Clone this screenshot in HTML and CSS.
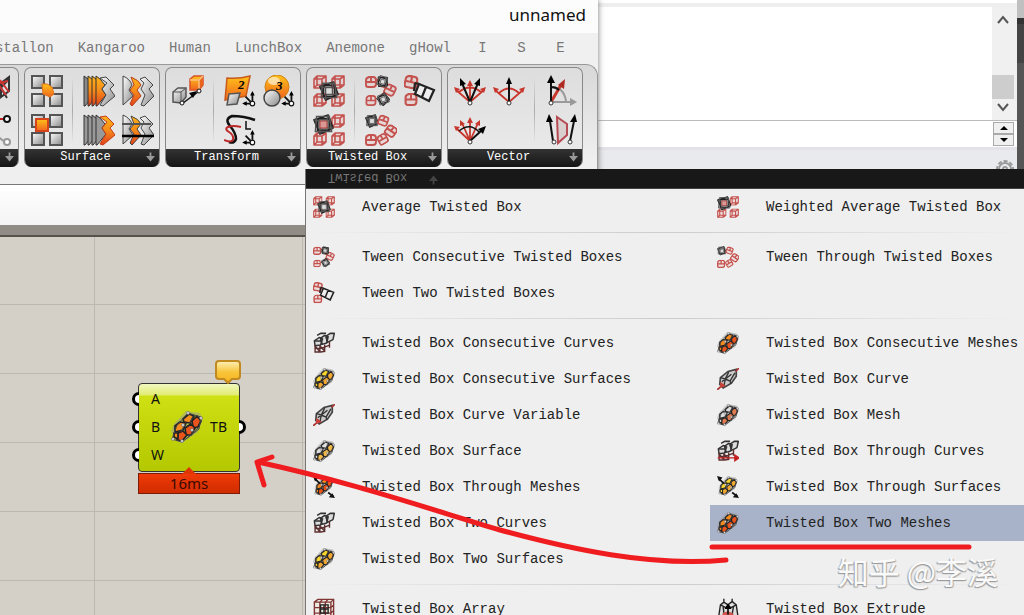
FILE: index.html
```
<!DOCTYPE html>
<html lang="en">
<head>
  <meta charset="UTF-8" />
  <meta name="viewport" content="width=device-width, initial-scale=1.0"/>
  <title>unnamed</title>
  <link rel="stylesheet" href="styles.css">
</head>
<body>
  <!-- Icon set -->
  <svg class="defs" aria-hidden="true">
    <linearGradient id="gGrey" x2="1" y2="1"><stop stop-color="#fff"/><stop offset="1" stop-color="#888"/></linearGradient>
    <linearGradient id="gOrange" x2="0" y2="1"><stop stop-color="#ffc21a"/><stop offset="1" stop-color="#f0641e"/></linearGradient>
    <linearGradient id="gFlame" x2="0" y2="1"><stop stop-color="#ffb41a"/><stop offset=".5" stop-color="#f58a1a"/><stop offset="1" stop-color="#e0401c"/></linearGradient>
    <linearGradient id="gGold" x2="0" y2="1"><stop stop-color="#fff0b8"/><stop offset=".5" stop-color="#f8c53c"/><stop offset="1" stop-color="#f6b21d"/></linearGradient>

    <symbol id="cube" viewBox="0 0 14 14">
      <path d="M1 4h8v9H1zM4 1h9v9H4zM1 4l3-3M9 4l4-3M9 13l4-3M1 13l3-3" fill="#e9b5b2" fill-opacity=".3" stroke="currentColor" stroke-width="1.600" stroke-linejoin="round"/>
    </symbol>
    <symbol id="core" viewBox="0 0 18 18">
      <path d="M1 5l12-4 4 11-11 5zM4 4h10v10H4z" fill="none" stroke="#222" stroke-width="1.700" stroke-linejoin="round"/>
      <path d="M3 2h11l2 13H2zM1 5l5 1M13 1l-1 5M17 12l-5 0M6 17v-5" fill="none" stroke="#555" stroke-width="1.200"/>
      <rect x="6" y="6" width="6" height="6" fill="#ddd" stroke="#444"/>
    </symbol>
    <symbol id="brick" viewBox="0 0 12 12">
      <path d="M1 4q0-2 3-3h4q3 0 3 3v4q0 3-3 3H3q-2 0-2-2zM1 6h10M6 1v5" fill="#e9b5b2" fill-opacity=".3" stroke="currentColor" stroke-width="1.900"/>
    </symbol>

    <symbol id="average" viewBox="0 0 32 32">
      <g class="red"><use href="#cube" x="0" y="0" width="14" height="14"/><use href="#cube" x="18" y="0" width="14" height="14"/><use href="#cube" x="0" y="18" width="14" height="14"/><use href="#cube" x="18" y="18" width="14" height="14"/></g>
      <use href="#core" x="6" y="6" width="20" height="20"/>
    </symbol>
    <symbol id="weighted" viewBox="0 0 32 32">
      <g class="red"><use href="#cube" x="18" y="0" width="14" height="14"/><use href="#cube" x="0" y="18" width="14" height="14"/><use href="#cube" x="18" y="18" width="14" height="14"/></g>
      <use href="#core" x="0" y="0" width="21" height="21"/>
      <path d="M7 7h7v7H7z" fill="#d99894" stroke="#b0403c"/>
    </symbol>
    <symbol id="tween-consecutive" viewBox="0 0 32 32">
      <g class="red"><use href="#brick" x="0" y="1" width="12" height="12"/><use href="#brick" x="0" y="20" width="12" height="11"/><use href="#brick" x="19" y="9" width="12" height="12" transform="rotate(25 25 15)"/><path d="M10 5l5 0M16 11l6 2M16 20l5-2" stroke="currentColor" stroke-width="2"/></g>
      <use href="#core" x="11" y="0" width="13" height="13" transform="rotate(20 17 7)"/><use href="#core" x="12" y="18" width="13" height="13" transform="rotate(-20 18 25)"/>
    </symbol>
    <symbol id="tween-through" viewBox="0 0 32 32">
      <use href="#core" x="0" y="0" width="14" height="14"/>
      <g class="red"><use href="#brick" x="13" y="1" width="11" height="11" transform="rotate(20 18 6)"/><use href="#brick" x="20" y="11" width="12" height="12" transform="rotate(35 26 17)"/><use href="#brick" x="12" y="20" width="11" height="11" transform="rotate(-30 17 25)"/><use href="#brick" x="0" y="20" width="12" height="12"/></g>
    </symbol>
    <symbol id="tween-two" viewBox="0 0 32 32">
      <g class="red"><use href="#brick" x="0" y="0" width="14" height="14" transform="rotate(12 7 7)"/><use href="#brick" x="0" y="18" width="14" height="13"/></g>
      <path d="M15 9l15 6-5 11-14-7zM22 12l-4 10M11 8l4 1M11 8l-1 8" fill="#eee" stroke="#222" stroke-width="2.200"/>
    </symbol>

    <!-- twisted box bodies, the cell colour comes from the svg's class -->
    <symbol id="cells" viewBox="0 0 32 32">
      <path d="M0 20l5 10 6 2 16-11 5-13-3-6-14-2L3 13z" fill="#999" opacity=".5"/>
      <g stroke="#222" stroke-width="1.700" stroke-linejoin="round">
        <path class="cell-a" d="M4 15l5-4 6 1-3 7-8 2z"/>
        <path class="cell-a" d="M12 8l6-5 5 2-4 7-6-1z"/>
        <path class="cell-b" d="M21 10l5-5 4 5-3 6-5 1z"/>
        <path class="cell-b" d="M14 17l6-4 4 4-4 7-5 0z"/>
        <path class="cell-b" d="M7 22l5-2 4 4-5 6-5-1z"/>
        <path class="cell-a" d="M3 22l4 0 0 6-4-2z"/>
      </g>
      <path d="M1 28l5-14 11-12 13 4-2 12-17 13zM10 21l4-8M19 12l3-7M15 28l12-11" fill="none" stroke="#444"/>
      <g fill="#ddd" stroke="#555" stroke-width=".5"><circle cx="2" cy="28" r="1.500"/><circle cx="17" cy="2" r="1.500"/><circle cx="30" cy="7" r="1.500"/><circle cx="12" cy="14" r="1.500"/><circle cx="21" cy="19" r="1.500"/><circle cx="11" cy="30" r="1.500"/></g>
    </symbol>
    <symbol id="cells-through" viewBox="0 0 32 32">
      <use href="#cells" x="2" y="0" width="28" height="29"/>
      <path d="M2 3l8 8M22 24l8 6" stroke="#111" stroke-width="2.500"/>
      <path d="M0 0l8 2-5 6zM32 32l-9-1 5-6z" fill="#111"/>
    </symbol>
    <symbol id="frames" viewBox="0 0 32 32">
      <g fill="#ddd" stroke="#333" stroke-width="2.200" stroke-linejoin="round">
        <path d="M2 13l7-5 5 2-3 9-8 1zM11 9l6-4 5 2-2 9-7 2zM19 6l6-4h6l-2 9-8 4z"/>
        <path d="M3 13h8M11 9l2 9M19 7l2 8M6 5l5-3h8" fill="none"/>
      </g>
      <path d="M3 19v10M10 19v11M17 18v11M24 13v10M3 24h7l7-2 7-3M2 29h9l7-1M3 20l7 9M10 20l7 8" fill="none" stroke="#5d3030" stroke-width="2"/>
    </symbol>
    <symbol id="frames-through" viewBox="0 0 32 32">
      <use href="#frames"/>
      <path d="M1 26h24M26 22l6 4-6 4z" fill="#c32020" stroke="#c32020" stroke-width="2"/>
    </symbol>
    <symbol id="capsule" viewBox="0 0 32 32">
      <path d="M4 24l1-10 11-9 12-3 0 10-7 10-12 7z" fill="#ccc" stroke="#444" stroke-width="2.500"/>
      <path d="M5 14l7 2 5-10M12 16l-2 11M12 16l7 3 7-12M19 19l1 4M7 20l14-11" fill="none" stroke="#333" stroke-width="2"/>
      <path d="M0 32l7-6M27 5l5-5" stroke="#a33" stroke-width="2.500"/>
      <path d="M4 29l1-9 8 6z" fill="#c94138"/>
    </symbol>
    <symbol id="array" viewBox="0 0 32 32">
      <path d="M2 6h24v24H2zM2 14h24M2 22h24M10 6v24M18 6v24M2 6l5-4h23v23l-4 5M26 6l4-4M26 14l4-4M26 22l4-4M10 6l4-4M18 6l4-4" fill="#dda" fill-opacity=".2" stroke="#813434" stroke-width="2"/>
      <path d="M11 10h11v12H11zM11 16h11M16 10v12" fill="none" stroke="#222" stroke-width="2"/>
    </symbol>
    <symbol id="extrude" viewBox="0 0 32 32">
      <path d="M2 30l3-20 5-4 6 4 6-5 6 5 3 20M5 10l8 4 3-4 4 4 8-4M10 6V1M22 5V1M9 13l2 17M24 12l-3 18" fill="#ddd" stroke="#222" stroke-width="2"/>
      <path d="M8 22l8-3 8 4v9H8z" fill="#d0524c"/>
      <path d="M16 24V13" stroke="#111" stroke-width="2.500"/><path d="M16 8l5 8H11z"/>
    </symbol>

    <symbol id="axes" viewBox="0 0 12 14">
      <path d="M9 2v9H2M9 11l-6-6" fill="none" stroke="#111" stroke-width="1.600"/>
      <path d="M9 0l2 4H7zM0 11l4-2v4z"/>
      <circle cx="9" cy="11" r="2" fill="#fff" stroke="#111"/>
    </symbol>
    <symbol id="vein" viewBox="0 0 12 32">
      <path d="M1 1q4 2 9 9l-3 4 4 6-9 11H1z" stroke="#333"/>
    </symbol>
    <symbol id="drop" viewBox="0 0 10 10">
      <path d="M4 0h2v4h4L5 10 0 4h4z"/>
    </symbol>
  </svg>

  <!-- Command history window -->
  <section class="rhino">
    <div class="rhino-main">
      <div class="history">
        <textarea aria-label="Command history" readonly></textarea>
        <div class="scroll">
          <button aria-label="Scroll up"><svg width="12" height="10" viewBox="0 0 12 10"><path d="M1 8l5-6 5 6" fill="none" stroke="#555" stroke-width="2"/></svg></button>
          <span class="thumb"></span>
          <button aria-label="Scroll down"><svg width="12" height="10" viewBox="0 0 12 10"><path d="M1 2l5 6 5-6" fill="none" stroke="#555" stroke-width="2"/></svg></button>
        </div>
      </div>
      <div class="command">
        <input type="text" aria-label="Command">
        <div class="spinner">
          <button aria-label="Previous"><svg width="8" height="4" viewBox="0 0 8 4"><path d="M0 4l4-4 4 4z"/></svg></button>
          <button aria-label="Next"><svg width="8" height="4" viewBox="0 0 8 4"><path d="M0 0l4 4 4-4z"/></svg></button>
        </div>
      </div>
      <div class="rhino-tabs">
        <svg width="20" height="20" viewBox="0 0 20 20" fill="none" stroke="#999" stroke-width="2"><circle cx="10" cy="10" r="8" stroke-dasharray="4 2"/><circle cx="10" cy="10" r="6"/><circle cx="10" cy="10" r="2"/></svg>
      </div>
    </div>
    <div class="rhino-side"></div>
  </section>

  <!-- Grasshopper window -->
  <main class="gh">
    <h1 class="title">unnamed</h1>
    <nav class="tabs">
      <a href="#">Crystallon</a>
      <a href="#">Kangaroo</a>
      <a href="#">Human</a>
      <a href="#">LunchBox</a>
      <a href="#">Anemone</a>
      <a href="#">gHowl</a>
      <a href="#" class="short">I</a>
      <a href="#" class="short">S</a>
      <a href="#" class="short">E</a>
    </nav>

    <div class="ribbon">
      <div class="panel">
        <div class="tools end">
          <div class="set">
            <svg viewBox="0 0 32 32" fill="none" stroke="#333" stroke-width="2"><path d="M3 4l12 14L28 4M8 24l9-16 9 15M20 8l8-6v14l-8 6z"/><path d="M4 12l23-6M12 2l13 18M19 5l9 12" stroke="#c33"/></svg>
            <svg viewBox="0 0 32 32" fill="none" stroke="#999" stroke-width="2"><path d="M2 20l14 2 8 6"/><path d="M8 5h16" stroke="#b22"/><circle cx="26" cy="5" r="3" fill="#fff" stroke="#111"/><circle cx="26" cy="28" r="3" fill="#fff"/></svg>
          </div>
        </div>
        <button class="panel-name" aria-label="More"><span></span><svg><use href="#drop"/></svg></button>
      </div>

      <div class="panel">
        <div class="tools">
          <div class="set">
            <svg viewBox="0 0 32 32" fill="url(#gGrey)" stroke="#555" stroke-width="2"><path d="M1 1h12v12H1z"/><path d="M19 1h12v12H19z"/><path d="M1 19h12v12H1z"/><path d="M19 19h12v12H19z"/><path d="M11 9l5 0 5 3 2 7-4 3-7-3z" fill="url(#gOrange)" stroke="#e0741a" stroke-width="1"/></svg>
            <svg viewBox="0 0 32 32" fill="url(#gGrey)" stroke="#555" stroke-width="2"><path d="M1 1h12v12H1z"/><path d="M19 1h12v12H19z"/><path d="M1 19h12v12H1z"/><path d="M19 19h12v12H19z"/><path d="M5 5h12v12H5z" fill="url(#gOrange)" stroke="#d8441a"/></svg>
          </div>
          <hr>
          <div class="set two">
            <svg viewBox="0 0 32 32"><use href="#vein" x="0" width="12" height="32" fill="#888"/><g fill="url(#gFlame)"><use href="#vein" x="4" width="12" height="32"/><use href="#vein" x="8" width="12" height="32"/><use href="#vein" x="12" width="12" height="32"/></g><path d="M17 3l6-1 8 8-4 4 5 7-12 10-3-1 6-10-4-6 5-6z" fill="url(#gGrey)" stroke="#444"/></svg>
            <svg viewBox="0 0 32 32"><g fill="url(#gGrey)" stroke="#444"><path d="M1 1q7 3 9 9l-3 5 4 6L1 30z"/><path d="M18 4l5-2 8 8-4 4 5 7-10 10-3-1 4-10-4-6 3-6z"/><path d="M9 2q8 3 10 8l-4 5 4 6-9 10-2-2 4-9-4-5 4-5z" fill="url(#gFlame)" stroke="#b5401c"/></g></svg>
            <svg viewBox="0 0 32 32"><g fill="#999"><use href="#vein" x="0" width="12" height="32"/><use href="#vein" x="4" width="12" height="32"/><use href="#vein" x="8" width="12" height="32"/><use href="#vein" x="12" width="12" height="32"/></g><path d="M17 3l6-1 8 8-4 4 5 7-12 10-3-1 6-10-4-6 5-6z" fill="url(#gFlame)" stroke="#c43c18"/></svg>
            <svg viewBox="0 0 32 32"><g fill="url(#gGrey)" stroke="#444"><path d="M1 1q7 3 9 9l-3 5 4 6L1 30z"/><path d="M18 4l5-2 8 8-4 4 5 7-10 10-3-1 4-10-4-6 3-6z"/><path d="M9 2q8 3 10 8l-4 5 4 6-9 10-2-2 4-9-4-5 4-5z" fill="url(#gFlame)"/></g><path d="M0 10h29" stroke="#555" stroke-width="2"/><path d="M0 22h32" stroke="#000" stroke-width="2.500"/></svg>
          </div>
        </div>
        <button class="panel-name"><span>Surface</span><svg><use href="#drop"/></svg></button>
      </div>

      <div class="panel">
        <div class="tools">
          <div class="set">
            <svg viewBox="0 0 32 32"><path d="M18 4l4-3h9v9l-4 5h-9z" fill="url(#gOrange)" stroke="#d8502a" stroke-width="1.500"/><path d="M27 5l4-4v9l-4 5z" fill="#e8641e"/><path d="M18 5h9v9M27 5l4-4" fill="none" stroke="#ffc080" stroke-width="1.500"/><path d="M1 17l5-4h8v9l-5 6-8-1z" fill="url(#gGrey)" stroke="#555" stroke-width="1.500"/><path d="M1 17h8v10M9 17l5-4" fill="none" stroke="#555"/><path d="M11 28l15-11" stroke="#111" stroke-width="1.500"/><path d="M25 16l-8 2 4 5z"/><circle cx="10" cy="28" r="2" fill="#fff" stroke="#111"/><circle cx="27" cy="16" r="2" fill="#fff" stroke="#111"/></svg>
          </div>
          <hr>
          <div class="set two">
            <svg viewBox="0 0 32 32"><path d="M3 3q12 1 23-2l-4 20-21 4z" fill="url(#gOrange)" stroke="#c65a1a" stroke-width="1.500"/><path d="M5 19l11-1-3 11-10 1z" fill="url(#gGrey)" stroke="#555" stroke-width="1.500"/><text x="14" y="14" class="digit">2</text><use href="#axes" x="18" y="16" width="14" height="16"/></svg>
            <svg viewBox="0 0 32 32"><circle cx="14" cy="12" r="12" fill="url(#gOrange)" stroke="#d08318"/><ellipse cx="11" cy="6" rx="6" ry="4" fill="#fff" opacity=".6"/><circle cx="9" cy="23" r="8" fill="url(#gGrey)" stroke="#444" stroke-width="1.500"/><text x="13" y="15" class="digit">3</text><use href="#axes" x="18" y="16" width="14" height="16"/></svg>
            <svg viewBox="0 0 32 32"><path d="M31 6Q20 2 8 2 0 5 6 12t6 13q-2 5-7 3" fill="none" stroke="#111" stroke-width="2.500"/><path d="M17 13q-8-2-13 0-4 2 1 5t4 8q-3 3-9 0" fill="none" stroke="#bd2929" stroke-width="2"/><path d="M22 7v8h5" fill="none" stroke="#111" stroke-width="1.500"/><use href="#axes" x="18" y="16" width="14" height="16"/></svg>
          </div>
        </div>
        <button class="panel-name"><span>Transform</span><svg><use href="#drop"/></svg></button>
      </div>

      <div class="panel">
        <div class="tools">
          <div class="set">
            <svg><use href="#average"/></svg>
            <svg><use href="#weighted"/></svg>
          </div>
          <hr>
          <div class="set two">
            <svg><use href="#tween-consecutive"/></svg>
            <svg><use href="#tween-two"/></svg>
            <svg><use href="#tween-through"/></svg>
          </div>
        </div>
        <button class="panel-name"><span>Twisted Box</span><svg><use href="#drop"/></svg></button>
      </div>

      <div class="panel">
        <div class="tools">
          <div class="set two">
            <svg viewBox="0 0 32 32"><g stroke="#c8372d" stroke-width="1.800" fill="none"><path d="M16 27L2 15M16 27l14-12M16 27V8M5 17q11-9 22 0"/></g><path d="M0 12l6 2-4 4zM32 12l-6 2 4 4zM16 5l3 6h-6z" fill="#c8372d"/><path d="M16 27L8 8M16 27l8-19" stroke="#111" stroke-width="2"/><path d="M6 3l6 6-6 2zM26 3l-6 6 6 2z"/><circle cx="16" cy="28" r="2" fill="#fff" stroke="#333"/></svg>
            <svg viewBox="0 0 32 32"><g stroke="#c8372d" stroke-width="1.800" fill="none"><path d="M16 27L2 15M16 27l14-12M6 18q10-9 20 0"/></g><path d="M0 12l6 2-4 4zM32 12l-6 2 4 4z" fill="#c8372d"/><path d="M16 27V7" stroke="#111" stroke-width="2"/><path d="M16 2l3 7h-6z"/><circle cx="16" cy="28" r="2" fill="#fff" stroke="#333"/></svg>
            <svg viewBox="0 0 32 32"><g stroke="#c8372d" stroke-width="1.800" fill="none"><path d="M16 27L2 14M16 27L8 9M16 27V7M16 27l8-18"/></g><path d="M0 12l6 1-4 4zM6 6l5 4-5 2zM16 3l3 6h-6zM26 6l-5 4 5 2z" fill="#c8372d"/><path d="M5 17q11-9 20 1" fill="none" stroke="#111" stroke-width="1.500"/><path d="M16 27l11-10" stroke="#111" stroke-width="2"/><path d="M32 12l-3 8-5-5z"/><circle cx="16" cy="28" r="2" fill="#fff" stroke="#333"/></svg>
          </div>
          <hr>
          <div class="set">
            <svg viewBox="0 0 32 32"><path d="M6 27h20M6 12q13 0 15 14" fill="none" stroke="#999" stroke-width="2"/><path d="M32 27l-7-4v8z" fill="#999"/><path d="M6 27l10-17" stroke="#c8372d" stroke-width="3"/><path d="M20 4l-1 10-6-4z" fill="#b02a24"/><path d="M6 27V6M6 12q5 0 8 3" fill="none" stroke="#111" stroke-width="2"/><path d="M6 0l4 8H2z"/><circle cx="6" cy="28" r="2" fill="#fff" stroke="#333"/></svg>
            <svg viewBox="0 0 32 32"><path d="M12 3l10 7v11l-9 8z" fill="#d9cfcf" stroke="#b64a52" stroke-width="2"/><path d="M8 27L5 7M25 27l4-20" stroke="#111" stroke-width="2"/><path d="M4 0l4 8H1zM30 0l2 8h-7z"/><circle cx="9" cy="28" r="2" fill="#fff" stroke="#333"/><circle cx="25" cy="28" r="2" fill="#fff" stroke="#333"/></svg>
          </div>
        </div>
        <button class="panel-name"><span>Vector</span><svg><use href="#drop"/></svg></button>
      </div>
    </div>

    <div class="canvas-bar"></div>

    <div class="canvas">
      <div class="component">
        <div class="body">
          <ul class="ports in"><li>A</li><li>B</li><li>W</li></ul>
          <svg class="mesh"><use href="#cells"/></svg>
          <ul class="ports out"><li>TB</li></ul>
        </div>
        <div class="profiler">16ms</div>
        <svg class="bubble" viewBox="0 0 26 24"><path d="M4 1h18q3 0 3 3v12q0 3-3 3h-5l-4 4-4-4H4q-3 0-3-3V4q0-3 3-3z" fill="url(#gGold)" stroke="#c08a20" stroke-width="2"/></svg>
      </div>
    </div>
  </main>

  <!-- Drop-down of the Twisted Box panel -->
  <div class="menu">
    <div class="menu-head"><span>Twisted Box</span><svg><use href="#drop"/></svg></div>
    <div class="items">
      <button><svg><use href="#average"/></svg>Average Twisted Box</button>
      <button><svg><use href="#weighted"/></svg>Weighted Average Twisted Box</button>
    </div>
    <hr>
    <div class="items">
      <button><svg><use href="#tween-consecutive"/></svg>Tween Consecutive Twisted Boxes</button>
      <button><svg><use href="#tween-through"/></svg>Tween Through Twisted Boxes</button>
      <button><svg><use href="#tween-two"/></svg>Tween Two Twisted Boxes</button>
    </div>
    <hr>
    <div class="items">
      <button><svg><use href="#frames"/></svg>Twisted Box Consecutive Curves</button>
      <button><svg class="mesh"><use href="#cells"/></svg>Twisted Box Consecutive Meshes</button>
      <button><svg class="surf"><use href="#cells"/></svg>Twisted Box Consecutive Surfaces</button>
      <button><svg><use href="#capsule"/></svg>Twisted Box Curve</button>
      <button><svg><use href="#capsule"/></svg>Twisted Box Curve Variable</button>
      <button><svg class="half-mesh"><use href="#cells"/></svg>Twisted Box Mesh</button>
      <button><svg class="half-surf"><use href="#cells"/></svg>Twisted Box Surface</button>
      <button><svg><use href="#frames-through"/></svg>Twisted Box Through Curves</button>
      <button><svg class="mesh"><use href="#cells-through"/></svg>Twisted Box Through Meshes</button>
      <button><svg class="surf"><use href="#cells-through"/></svg>Twisted Box Through Surfaces</button>
      <button><svg><use href="#frames"/></svg>Twisted Box Two Curves</button>
      <button class="selected"><svg class="mesh"><use href="#cells"/></svg>Twisted Box Two Meshes</button>
      <button><svg class="surf"><use href="#cells"/></svg>Twisted Box Two Surfaces</button>
    </div>
    <hr>
    <div class="items">
      <button><svg><use href="#array"/></svg>Twisted Box Array</button>
      <button><svg><use href="#extrude"/></svg>Twisted Box Extrude</button>
    </div>
  </div>

  <!-- Red pen marks -->
  <svg class="marks" width="1024" height="615" viewBox="0 0 1024 615" aria-hidden="true">
    <path d="M726 560C650 567 570 549 500 530 420 506 350 482 258 462M272 457l-15 5 7 23M712 547H969"/>
  </svg>
  <div class="watermark" lang="zh">知乎 @李溪</div>
</body>
</html>
```
FILE: styles.css
```
*,
*::before,
*::after {
  box-sizing: border-box;
}

body {
  margin: 0;
  height: 100vh;
  position: relative;
  overflow: hidden;
  background: #efefef;
  font-family: "Liberation Mono", monospace;
  font-size: 14px;
  color: #222;
}

button {
  padding: 0;
  border: none;
  background: none;
  font: inherit;
  color: inherit;
}

hr {
  border: none;
  margin: 0;
}

.defs {
  position: absolute;
  width: 0;
  height: 0;
}

.red {
  color: #c4524e;
}

.digit {
  font: italic bold 13px "Liberation Serif", serif;
}

/* command history window */
.rhino {
  position: absolute;
  left: 598px;
  right: 0;
  top: 0;
  height: 170px;
  display: flex;
  background: #eee;
}

.rhino-main {
  flex: 1;
  display: flex;
  flex-direction: column;
  border-top: 3px solid #fff;
  padding-top: 4px;
}

.history {
  flex: 1;
  display: flex;
  border-bottom: 1px solid #bbb;
}

.history textarea,
.command input {
  flex: 1;
  min-width: 0;
  border: none;
  resize: none;
  background: #fff;
}

.scroll {
  width: 25px;
  padding: 5px 3px 3px 0;
  display: flex;
  flex-direction: column;
  background: #f0f0f0;
}

.scroll .thumb {
  height: 24px;
  margin-top: auto;
  background: #cdcdcd;
}

.scroll button {
  height: 18px;
}

.command {
  height: 26px;
  display: flex;
  background: #fff;
}

.spinner {
  width: 21px;
  margin: 1px 3px 1px 0;
  display: flex;
  flex-direction: column;
}

.spinner button {
  flex: 1;
  display: grid;
  place-items: center;
  border: 1px solid #aaa;
  background: #f0f0f0;
}

.rhino-tabs {
  height: 23px;
  padding: 9px 2px 0 0;
  border-top: 3px solid #e2e2e8;
  text-align: right;
  overflow: hidden;
  background: #e9eaee;
}

.rhino-side {
  width: 7px;
  background: linear-gradient(#c0c0c0 18px, #333 18px, #333 24px, #444 24px, #444 63px, #555 63px);
}

/* grasshopper window */
.gh {
  position: absolute;
  left: 0;
  top: 0;
  bottom: 0;
  width: 598px;
  display: flex;
  flex-direction: column;
  background: #f0f0f0;
  box-shadow: 0 0 6px #777;
}

.title {
  margin: 0;
  height: 33px;
  padding-right: 12px;
  background: #fcfcfc;
  font: 17px/30px "Noto Sans", sans-serif;
  color: #111;
  text-align: right;
}

.tabs {
  height: 31px;
  padding-right: 18px;
  display: flex;
  justify-content: flex-end;
  overflow: hidden;
  line-height: 31px;
}

.tabs a {
  flex: none;
  padding: 0 12px;
  color: #777;
  text-decoration: none;
}

.tabs .short {
  width: 39px;
  padding: 0;
  text-align: center;
}

.ribbon {
  height: 121px;
  padding: 2px 14px 0 0;
  display: flex;
  justify-content: flex-end;
  align-items: flex-start;
  gap: 5px;
  overflow: hidden;
  border: 1px solid #999;
  border-width: 1px 1px 1px 0;
  border-bottom-color: #777;
  border-radius: 0 12px 0 0;
  background: linear-gradient(#d8d8d8, #efefef 80%);
}

.panel {
  flex: none;
  width: 136px;
  border: 1px solid #888;
  border-bottom: none;
  border-radius: 7px;
  overflow: hidden;
  background: linear-gradient(#ddd, #ececec);
}

.tools {
  height: 81px;
  padding: 3px 2px 0;
  display: flex;
}

.tools.end {
  justify-content: flex-end;
}

.set {
  display: grid;
  grid-template-columns: 39px;
  grid-auto-rows: 39px;
  place-items: center;
}

.set.two {
  grid-template-columns: 39px 39px;
}

.set svg {
  width: 32px;
  height: 32px;
}

.tools hr {
  width: 1px;
  height: 66px;
  margin: 6px;
  background: linear-gradient(transparent, #aaa, transparent);
}

.panel-name {
  width: 100%;
  height: 18px;
  padding: 0 4px 2px 0;
  display: flex;
  align-items: center;
  background: linear-gradient(#333, #151515);
  color: #fff;
  font-size: 12px;
}

.panel-name span {
  flex: 1;
}

.panel-name svg,
.menu-head svg {
  width: 9px;
  height: 10px;
  fill: #999;
}

.canvas-bar {
  height: 50px;
  border-bottom: 10px solid #918d86;
  background: linear-gradient(#fff, #f4f4f4);
}

.canvas {
  flex: 1;
  position: relative;
  border-top: 2px solid #55524c;
  background-color: #d4d0c8;
  background-image: linear-gradient(#bcb9b2 1px, transparent 1px), linear-gradient(90deg, #bcb9b2 1px, transparent 1px);
  background-size: 208px 69px;
  background-position: 94px 67px;
}

.component {
  position: absolute;
  left: 138px;
  top: 146px;
  width: 102px;
}

.bubble {
  position: absolute;
  right: -1px;
  top: -23px;
  width: 26px;
  height: 24px;
}

.body {
  height: 89px;
  padding-bottom: 2px;
  display: flex;
  align-items: center;
  justify-content: space-between;
  border: 1px solid #333;
  border-radius: 4px;
  background: linear-gradient(#f2f8c0, #e0ec72 11px, #cfe013 12px, #b4c800);
  font: 14px/28px "Noto Sans", sans-serif;
  color: #111;
}

.body .mesh {
  width: 32px;
  height: 32px;
}

.ports {
  margin: 0;
  padding: 0;
  list-style: none;
}

.ports li {
  display: flex;
  align-items: center;
  gap: 12px;
}

/* half ring that sticks out of the body */
.in li::before,
.out li::after {
  content: "";
  width: 7px;
  height: 14px;
  border: 3px solid #000;
  background: #fff;
}

.in li::before {
  margin-left: -7px;
  border-right: none;
  border-radius: 7px 0 0 7px;
}

.out li::after {
  margin-right: -7px;
  border-left: none;
  border-radius: 0 7px 7px 0;
}

.profiler {
  position: relative;
  height: 21px;
  margin-top: 1px;
  border: 1px solid #7a1c08;
  background: linear-gradient(#f03a08, #cf2c00);
  font: 15px/18px "Noto Sans", sans-serif;
  color: #3a0a00;
  text-align: center;
}

.profiler::before {
  content: "";
  position: absolute;
  left: 43px;
  bottom: 100%;
  border: 7px solid transparent;
  border-top: none;
  border-bottom-color: #e03505;
}

/* drop-down menu */
.menu {
  position: absolute;
  left: 305px;
  right: 0;
  top: 169px;
  bottom: 0;
  overflow: hidden;
  border-left: 1px solid #777;
  background: #efefef;
}

.menu-head {
  height: 20px;
  padding: 0 0 0 22px;
  display: flex;
  align-items: flex-start;
  gap: 22px;
  border-bottom: 1px solid #444;
  background: #181818;
  color: #777;
  font-size: 12px;
  line-height: 16px;
}

.menu-head span {
  transform: scaleY(-1);
}

.menu-head svg {
  margin-top: 6px;
  transform: scaleY(-1);
  fill: #444;
}

.items {
  display: grid;
  grid-template-columns: 404px 1fr;
}

.items button {
  height: 36px;
  padding: 0 0 1px 7px;
  display: flex;
  align-items: center;
  gap: 27px;
  white-space: nowrap;
  text-align: left;
}

.items .selected {
  background: #a8b3c9;
}

.items svg {
  flex: none;
  width: 22px;
  height: 22px;
}

.menu > hr {
  height: 1px;
  margin: 7px 0 6px;
  background: linear-gradient(90deg, transparent, #ccc 50%, transparent);
}

/* cell colours of the twisted boxes */
.mesh {
  --cell-a: #f58a1f;
  --cell-b: #e8541c;
}

.surf {
  --cell-a: #fad52c;
  --cell-b: #f2a830;
}

.half-mesh {
  --cell-a: #ddd;
  --cell-b: #dd7a50;
}

.half-surf {
  --cell-a: #ddd;
  --cell-b: #f0b848;
}

.cell-a {
  fill: var(--cell-a);
}

.cell-b {
  fill: var(--cell-b);
}

.marks {
  position: absolute;
  left: 0;
  top: 0;
  pointer-events: none;
  fill: none;
  stroke: #f01d20;
  stroke-width: 5;
  stroke-linecap: round;
  stroke-linejoin: round;
}

.watermark {
  position: absolute;
  right: 26px;
  bottom: 22px;
  font: 31px/44px "Noto Sans CJK SC", sans-serif;
  color: #fafafa;
  text-shadow: -1px 1px 1px #999, 1px 1px 1px #aaa;
}
```
